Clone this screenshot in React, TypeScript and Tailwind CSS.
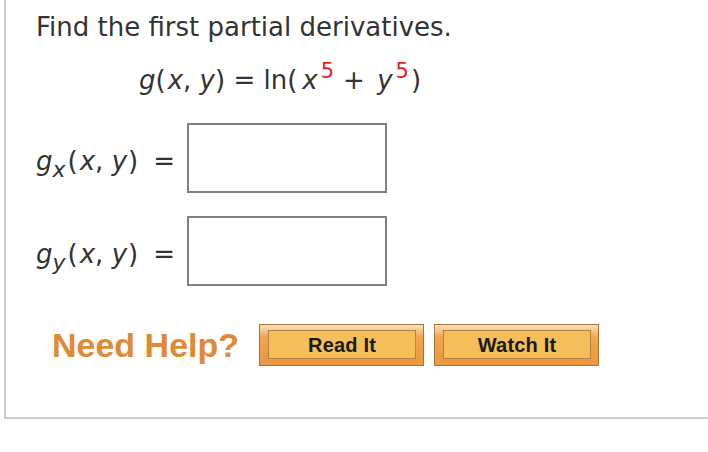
const math = "font-['DejaVu_Sans',Verdana,sans-serif]";

function HelpButton({ label }: { label: string }) {
  return (
    <div className="w-[165px] h-[42px] border border-[#a9733a] bg-[linear-gradient(to_bottom,#fbe3c2_0%,#f0a550_30%,#ea983e_100%)] pt-[5px] pb-[6px] pl-[8px] pr-[7px]">
      <div className="h-full border border-[#b9803f] bg-[#f4be5b] flex items-center justify-center font-['Liberation_Sans',Arial,sans-serif] font-bold text-[20px] text-[#1c1a14] leading-none tracking-[0.2px]">
        {label}
      </div>
    </div>
  );
}

function AnswerRow({ sub }: { sub: string }) {
  return (
    <div className="flex items-center">
      <div className="w-[151px] flex items-center pt-[6px] text-[26px] leading-[30px] text-[#333333]">
        <span className="italic">g</span>
        <sub className="italic text-[22px] relative top-[9px] mr-[2px]">{sub}</sub>
        <span>(</span>
        <span className="italic ml-[2px]">x</span>
        <span>,&nbsp;</span>
        <span className="italic">y</span>
        <span className="ml-[1px]">)</span>
        <span className="ml-auto mr-[12px]">=</span>
      </div>
      <div className="w-[200px] h-[70px] border-2 border-[#808080] bg-white" />
    </div>
  );
}

export default function App() {
  return (
    <div className="w-[708px] h-[452px] bg-white overflow-hidden">
      <div className={`ml-1 w-[704px] h-[419px] border-l-2 border-b-2 border-[#cccccc] pl-[30px] pt-3 ${math}`}>
        <p className="text-[26px] leading-[30px] text-[#333333]">Find the first partial derivatives.</p>

        <p className="mt-[23px] ml-[103px] text-[26px] leading-[30px] text-[#333333]">
          <span className="italic">g</span>(<span className="italic ml-[2px]">x</span>, <span className="italic">y</span>) = ln(
          <span className="italic ml-[5px]">x</span>
          <sup className="text-[21px] text-[#e8201c] relative top-[-11px] ml-[3px] mr-[9px]">5</sup>+{" "}
          <span className="italic ml-[4px]">y</span>
          <sup className="text-[21px] text-[#e8201c] relative top-[-11px] ml-[3px]">5</sup>
          <span className="ml-[2px]">)</span>
        </p>

        <div className="mt-[28px] flex flex-col gap-[23px]">
          <AnswerRow sub="x" />
          <AnswerRow sub="y" />
        </div>

        <div className="mt-[38px] ml-[16px] flex items-center">
          <span className="font-['Liberation_Sans',Arial,sans-serif] font-bold text-[34px] leading-none text-[#e08a36] mr-[20px]">
            Need Help?
          </span>
          <div className="flex gap-[10px]">
            <HelpButton label="Read It" />
            <HelpButton label="Watch It" />
          </div>
        </div>
      </div>
    </div>
  );
}
